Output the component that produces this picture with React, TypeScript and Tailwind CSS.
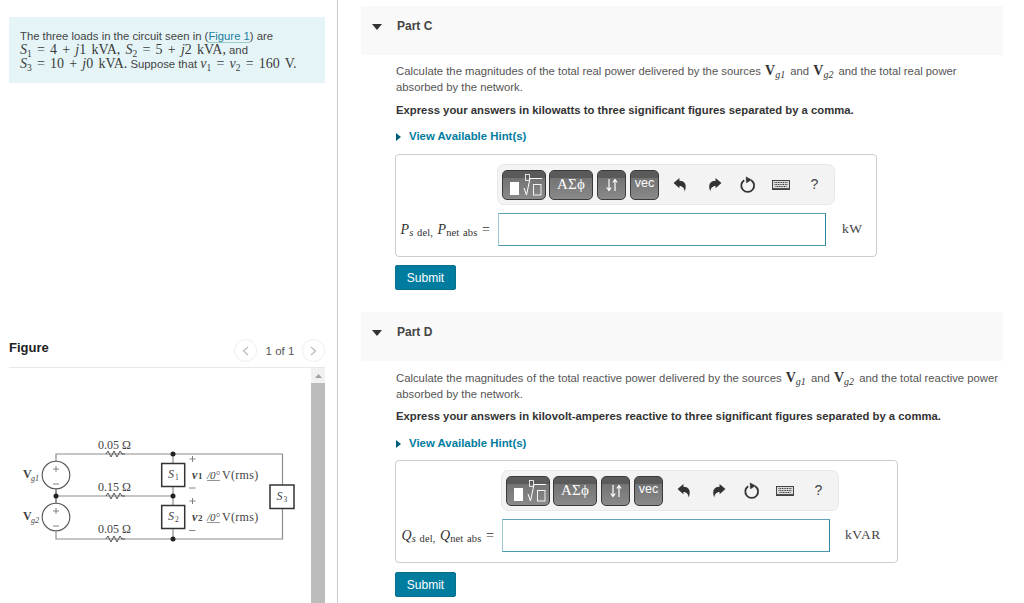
const serif = "font-['Liberation_Serif',serif]";

function Var({ children }: { children: React.ReactNode }) {
  return <i className={serif}>{children}</i>;
}

function Sub({ children }: { children: React.ReactNode }) {
  return <span className={`${serif} relative top-[3px] text-[9.5px] leading-none`}>{children}</span>;
}

function Math({ children }: { children: React.ReactNode }) {
  return <span className={`${serif} text-[14px] leading-[14px] [word-spacing:1.7px] text-[#3c3c3c]`}>{children}</span>;
}

function SourceV({ n }: { n: string }) {
  return (
    <span className={`${serif} ml-[1px] mr-[2px] text-[14px] leading-none text-[#333]`}>
      <b>V</b>
      <i className="relative top-[3px] text-[10px] leading-none">g{n}</i>
    </span>
  );
}

function ToolButton({ children, width }: { children: React.ReactNode; width: string }) {
  return (
    <div className={`${width} h-[30px] rounded-[5px] border border-[#3a3a3a] overflow-hidden flex flex-col relative bg-gradient-to-b from-[#6c6c6c] to-[#8a8a8a]`}>
      <div className="h-[7px] bg-[#5a5a5a]" />
      <div className="absolute inset-0 flex items-center justify-center text-white">{children}</div>
    </div>
  );
}

function Toolbar() {
  return (
    <div className="w-[338px] h-[41px] bg-[#f3f3f3] border border-[#e8e8e8] rounded-[7px] flex items-center pl-[4px]">
      <div className="flex gap-[3px]">
        <ToolButton width="w-[44px]">
          <svg width="40" height="28" viewBox="0 0 40 28" fill="none" stroke="#fff">
            <rect x="6" y="11" width="9" height="13" fill="#fff" stroke="none" />
            <rect x="21.5" y="3.5" width="4" height="6" strokeWidth="0.8" />
            <path d="M20 17 L22.5 24 L26 7.5 H38" strokeWidth="1" />
            <rect x="29.5" y="13.5" width="7.5" height="10.5" strokeWidth="0.9" />
          </svg>
        </ToolButton>
        <ToolButton width="w-[44px]">
          <span className={`${serif} text-[15px] tracking-[0.2px]`}>ΑΣϕ</span>
        </ToolButton>
        <ToolButton width="w-[29px] ml-px">
          <svg width="16" height="16" viewBox="0 0 16 16" fill="none" stroke="#fff" strokeWidth="1.2">
            <path d="M5 2 V13 M2.8 10.5 L5 13.5 L7.2 10.5" />
            <path d="M11 14 V3 M8.8 5.5 L11 2.5 L13.2 5.5" />
          </svg>
        </ToolButton>
        <ToolButton width="w-[29px] ml-px">
          <span className="text-[12.5px] -mt-[2px]">vec</span>
        </ToolButton>
      </div>
      <div className="flex items-center ml-[4px] text-[#333]">
        <div className="w-[34px] flex justify-center">
          <svg width="15" height="15" viewBox="0 0 14 14" fill="#333">
            <path d="M0.5 5.5 L6 1 V3.6 C10.5 3.6 13.5 6.5 11 13.5 C10.5 10.5 9 8.4 6 8.4 V10.5 Z" />
          </svg>
        </div>
        <div className="w-[34px] flex justify-center">
          <svg width="15" height="15" viewBox="0 0 14 14" fill="#333">
            <path d="M13.5 5.5 L8 1 V3.6 C3.5 3.6 0.5 6.5 3 13.5 C3.5 10.5 5 8.4 8 8.4 V10.5 Z" />
          </svg>
        </div>
        <div className="w-[33px] flex justify-center">
          <svg width="17" height="17" viewBox="0 0 17 17" fill="none" stroke="#333" strokeWidth="1.8">
            <path d="M5.2 4.2 A6.4 6.4 0 1 0 12.2 4.2" />
            <path d="M7 0.8 L12.6 3.8 L7.4 7 Z" fill="#333" strokeWidth="0.3" />
          </svg>
        </div>
        <div className="w-[34px] flex justify-center">
          <svg width="18" height="10" viewBox="0 0 18 10" fill="#ddd" stroke="#333" strokeWidth="0.9">
            <rect x="0.5" y="0.5" width="17" height="9" />
            <path d="M2.5 2.5 H15.5 M2.5 4.5 H15.5 M3.5 6.5 H14.5" strokeDasharray="1 0.7" strokeWidth="1.1" />
            <path d="M1 8.6 H17" strokeWidth="0.9" />
          </svg>
        </div>
        <div className="w-[33px] text-center text-[14px] text-[#444]">?</div>
      </div>
    </div>
  );
}

type PartProps = {
  name: string;
  kind: string;
  unitsLong: string;
  letter: string;
  unit: string;
  boxWidth: string;
  toolbarLeft: string;
  labelWidth: string;
  unitGap: string;
  sectionTop: string;
  questionTop: string;
  expressTop: string;
  hintTop: string;
  boxTop: string;
  submitTop: string;
};

function Part(props: PartProps) {
  const { name, kind, unitsLong, letter, unit, boxWidth, toolbarLeft, labelWidth, unitGap, sectionTop, questionTop, expressTop, hintTop, boxTop, submitTop } = props;
  return (
    <section className={`${sectionTop} w-[642px]`}>
      <div className="h-[49px] bg-[#f9f9f9] flex items-start pt-[13px] pl-[11px]">
        <svg width="10" height="6" viewBox="0 0 10 6" className="mt-[5px]">
          <path d="M0 0 H10 L5 6 Z" fill="#333" />
        </svg>
        <span className="ml-[15px] text-[12px] leading-[14px] font-bold text-[#444]">{name}</span>
      </div>
      <div className="pl-[35px]">
        <p className={`${questionTop} text-[11.3px] leading-[16px] text-[#555] w-[610px]`}>
          Calculate the magnitudes of the total {kind} power delivered by the sources <SourceV n="1" /> and <SourceV n="2" /> and the total {kind} power
          <br />
          absorbed by the network.
        </p>
        <p className={`${expressTop} text-[11.3px] leading-[16px] font-bold text-[#333]`}>
          Express your answers in {unitsLong} to three significant figures separated by a comma.
        </p>
        <div className={`${hintTop} h-[16px] flex items-center text-[11.4px] font-bold text-[#007c9f]`}>
          <svg width="5" height="8" viewBox="0 0 5 8" fill="#00607c">
            <path d="M0 0 L5 4 L0 8 Z" />
          </svg>
          <span className="ml-[8px]">View Available Hint(s)</span>
        </div>
      </div>
      <div className="ml-[34px]">
        <div className={`${boxTop} ${boxWidth} h-[103px] border border-[#ccc] rounded-[4px] pt-[9px]`}>
          <div className={toolbarLeft}>
            <Toolbar />
          </div>
          <div className="flex items-center mt-[8px] h-[33px]">
            <div className={`${serif} ${labelWidth} shrink-0 text-right pr-[8px] text-[14px] tracking-[0.1px] [word-spacing:1px] text-[#333] whitespace-nowrap`}>
              <i>{letter}</i>
              <i className="relative top-[2px] text-[10.5px]">s</i>
              <span className="relative top-[2px] text-[10.5px]"> del,</span> <i>{letter}</i>
              <span className="relative top-[2px] text-[10.5px]">net abs</span> =
            </div>
            <div className="w-[328px] h-[33px] border border-[#9cc9d6] border-t-[#5fa3b8] border-r-[#2f86a0] border-b-[#4c97ad] bg-white shrink-0" />
            <div className={`${unitGap} ${serif} text-[13.5px] text-[#444] tracking-[0.6px]`}>{unit}</div>
          </div>
        </div>
        <button className={`${submitTop} block w-[61px] h-[25px] bg-[#007c9f] rounded-[2px] border border-[#0a6f8c] text-white text-[12px]`}>
          Submit
        </button>
      </div>
    </section>
  );
}

function Resistor({ y }: { y: number }) {
  return <path d={`M106 ${y} l2 -3 l3 6 l3 -6 l3 6 l3 -6 l2 3 h3`} fill="none" stroke="#444" strokeWidth="0.9" />;
}

function Circuit() {
  return (
    <svg width="302" height="235" viewBox="9 368 302 235" className="block">
      <g fill="none" stroke="#8c8c8c" strokeWidth="1.2">
        <path d="M56 461 V454 H282.5 V485 M282.5 509 V539 H56 V531" />
        <path d="M56 496 H173 M173 454 V463 M173 487 V505 M173 529 V539" />
        <path d="M56 489 V503" stroke="#555" />
      </g>
      <g fill="#fff" stroke="#555" strokeWidth="1.1">
        <circle cx="56" cy="475" r="13.8" />
        <circle cx="56" cy="517" r="13.8" />
      </g>
      <Resistor y={454} />
      <Resistor y={496} />
      <Resistor y={539} />
      <g fill="#fff" stroke="#333" strokeWidth="1.5">
        <rect x="161.7" y="463.5" width="23" height="23" />
        <rect x="161.7" y="505.5" width="23" height="23" />
        <rect x="270" y="485" width="24" height="23.5" />
      </g>
      <g fill="#222">
        <circle cx="173" cy="454" r="2.5" />
        <circle cx="173" cy="496" r="2.5" />
        <circle cx="173" cy="539" r="2.5" />
        <circle cx="56" cy="496" r="2.5" />
      </g>
      <g stroke="#777" strokeWidth="0.9">
        <path d="M53 469 H59 M56 466 V472 M53 484 H59 M53 511 H59 M56 508 V514 M53 526 H59" />
        <path d="M189.5 459 H195.5 M192.5 456 V462 M189 488 H195.5 M189.5 501 H195.5 M192.5 498 V504 M189 530.5 H195.5" />
      </g>
      <g className="font-['Liberation_Serif',serif]" fill="#444" fontSize="12">
        <text x="98" y="449">0.05 Ω</text>
        <text x="98" y="491">0.15 Ω</text>
        <text x="98" y="533">0.05 Ω</text>
        <text x="23" y="478" fontSize="12" fontWeight="bold">V</text>
        <text x="31" y="481" fontSize="8" fontStyle="italic">g1</text>
        <text x="23" y="520" fontSize="12" fontWeight="bold">V</text>
        <text x="31" y="523" fontSize="8" fontStyle="italic">g2</text>
        <text x="168" y="478" fontStyle="italic">S</text>
        <text x="175" y="480" fontSize="7.5">1</text>
        <text x="168" y="520" fontStyle="italic">S</text>
        <text x="175" y="522" fontSize="7.5">2</text>
        <text x="276.5" y="500" fontStyle="italic">S</text>
        <text x="283.5" y="502" fontSize="7.5">3</text>
        <text x="192" y="479" fontStyle="italic" fontWeight="bold">v</text>
        <text x="198" y="479" fontSize="9" fontWeight="bold">1</text>
        <text x="207" y="479" fontStyle="italic" fontSize="11">/0°</text>
        <path d="M207 480.5 H220" stroke="#666" strokeWidth="0.7" />
        <text x="222" y="479" letterSpacing="0.3">V(rms)</text>
        <text x="192" y="521" fontStyle="italic" fontWeight="bold">v</text>
        <text x="198" y="521" fontSize="9" fontWeight="bold">2</text>
        <text x="207" y="521" fontStyle="italic" fontSize="11">/0°</text>
        <path d="M207 522.5 H220" stroke="#666" strokeWidth="0.7" />
        <text x="222" y="521" letterSpacing="0.3">V(rms)</text>
      </g>
    </svg>
  );
}

export default function App() {
  return (
    <div className="w-[1024px] h-[603px] overflow-hidden bg-white flex font-['Liberation_Sans',sans-serif]">
      <aside className="w-[338px] h-full shrink-0 border-r border-[#c8ccd0] pl-[9px] pr-[12px]">
        <div className="mt-[17px] h-[66px] bg-[#e5f5f7] pl-[11px] pt-[12px] text-[11.3px] leading-[14px] text-[#444]">
          <div>
            The three loads in the circuit seen in (<span className="text-[#1d7f9e] border-b border-[#9cc]">Figure 1</span>) are
          </div>
          <div>
            <Math><Var>S</Var><Sub>1</Sub> = 4 + <Var>j</Var>1 kVA, <Var>S</Var><Sub>2</Sub> = 5 + <Var>j</Var>2 kVA,</Math> and
          </div>
          <div>
            <Math><Var>S</Var><Sub>3</Sub> = 10 + <Var>j</Var>0 kVA.</Math> Suppose that <Math><Var>v</Var><Sub>1</Sub> = <Var>v</Var><Sub>2</Sub> = 160 V.</Math>
          </div>
        </div>
        <div className="mt-[254px] h-[31px] pt-[1px] border-b border-[#e6e9ea] flex items-start">
          <h2 className="text-[13px] leading-[20px] font-bold text-[#222]">Figure</h2>
          <div className="ml-auto flex items-center text-[11.5px] text-[#555] mt-[1px]">
            <span className="w-[23px] h-[23px] rounded-full border border-[#eee] flex items-center justify-center">
              <svg width="7" height="10" viewBox="0 0 7 10" fill="none" stroke="#bbb" strokeWidth="1.2"><path d="M6 1 L1.5 5 L6 9" /></svg>
            </span>
            <span className="w-[45px] text-center pl-[1px] pt-[2px]">1 of 1</span>
            <span className="w-[23px] h-[23px] rounded-full border border-[#eee] flex items-center justify-center">
              <svg width="7" height="10" viewBox="0 0 7 10" fill="none" stroke="#bbb" strokeWidth="1.2"><path d="M1 1 L5.5 5 L1 9" /></svg>
            </span>
          </div>
        </div>
        <div className="flex h-[235px]">
          <div className="w-[302px] shrink-0">
            <Circuit />
          </div>
          <div className="w-[14px] flex flex-col bg-[#f1f1f1]">
            <div className="h-[15px] flex items-center justify-center">
              <svg width="7" height="4" viewBox="0 0 7 4"><path d="M0 4 L3.5 0 L7 4 Z" fill="#a3a3a3" /></svg>
            </div>
            <div className="flex-1 bg-[#bcbcbc]" />
          </div>
        </div>
      </aside>
      <main className="flex-1 pl-[23px]">
        <Part
          name="Part C"
          kind="real"
          unitsLong="kilowatts"
          letter="P"
          unit="kW"
          boxWidth="w-[482px]"
          toolbarLeft="ml-[101px]"
          labelWidth="w-[102px]"
          unitGap="ml-[16px]"
          sectionTop="mt-[6px]"
          questionTop="mt-[8px]"
          expressTop="mt-[7px]"
          hintTop="mt-[11px]"
          boxTop="mt-[9px]"
          submitTop="mt-[8px]"
        />
        <Part
          name="Part D"
          kind="reactive"
          unitsLong="kilovolt-amperes reactive"
          letter="Q"
          unit="kVAR"
          boxWidth="w-[503px]"
          toolbarLeft="ml-[105px]"
          labelWidth="w-[106px]"
          unitGap="ml-[15px]"
          sectionTop="mt-[22px]"
          questionTop="mt-[9px]"
          expressTop="mt-[6px]"
          hintTop="mt-[12px]"
          boxTop="mt-[8px]"
          submitTop="mt-[9px]"
        />
      </main>
    </div>
  );
}
